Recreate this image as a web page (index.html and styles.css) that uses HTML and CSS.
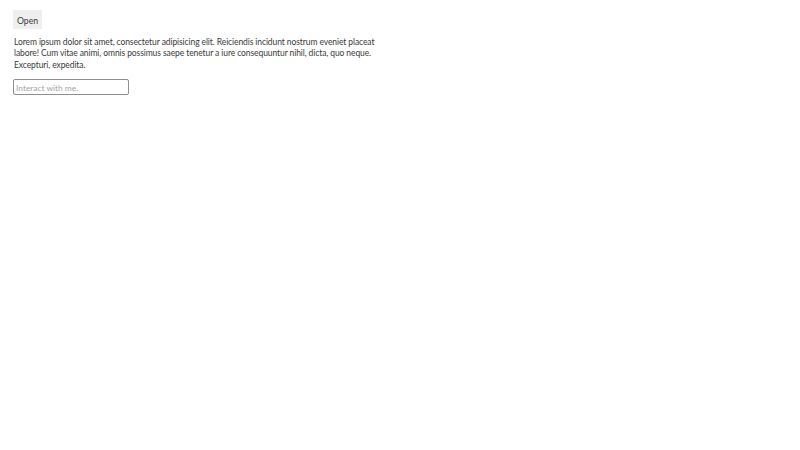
FILE: index.html
```html
<!DOCTYPE html>
<html>
<head>
<meta charset="utf-8">
<link rel="stylesheet" href="styles.css">
</head>
<body>
<div class="page">
  <button class="open-btn">Open</button>
  <p class="text">Lorem ipsum dolor sit amet, consectetur adipisicing elit. Reiciendis incidunt nostrum eveniet placeat<br>labore! Cum vitae animi, omnis possimus saepe tenetur a iure consequuntur nihil, dicta, quo neque.<br>Excepturi, expedita.</p>
  <input class="field" type="text" placeholder="Interact with me.">
</div>
</body>
</html>
```
FILE: styles.css
```css
html, body {
  margin: 0;
  padding: 0;
  background: #ffffff;
}
.page {
  display: flex;
  flex-direction: column;
  align-items: flex-start;
  padding: 10px 0 0 13px;
  font-family: "Lato", "Open Sans", sans-serif;
  font-size: 8.5px;
  color: #3a3a3a;
}
.open-btn {
  width: 29px;
  height: 19px;
  padding: 2px 0 0 0;
  border: none;
  border-radius: 0;
  background: #efefef;
  font-family: inherit;
  font-size: 8.7px;
  color: #3a3a3a;
}
.text {
  margin: 7.5px 0 0 1px;
  width: 400px;
  white-space: nowrap;
  line-height: 11.7px;
  letter-spacing: -0.09px;
}
.field {
  margin-top: 7.5px;
  box-sizing: border-box;
  width: 116px;
  height: 16px;
  padding: 1px 2px 0 2px;
  border: 1px solid #8f8f8f;
  border-radius: 2px;
  font-family: inherit;
  font-size: 8.4px;
  outline: none;
}
.field::placeholder {
  color: #a3a3a3;
}
```
